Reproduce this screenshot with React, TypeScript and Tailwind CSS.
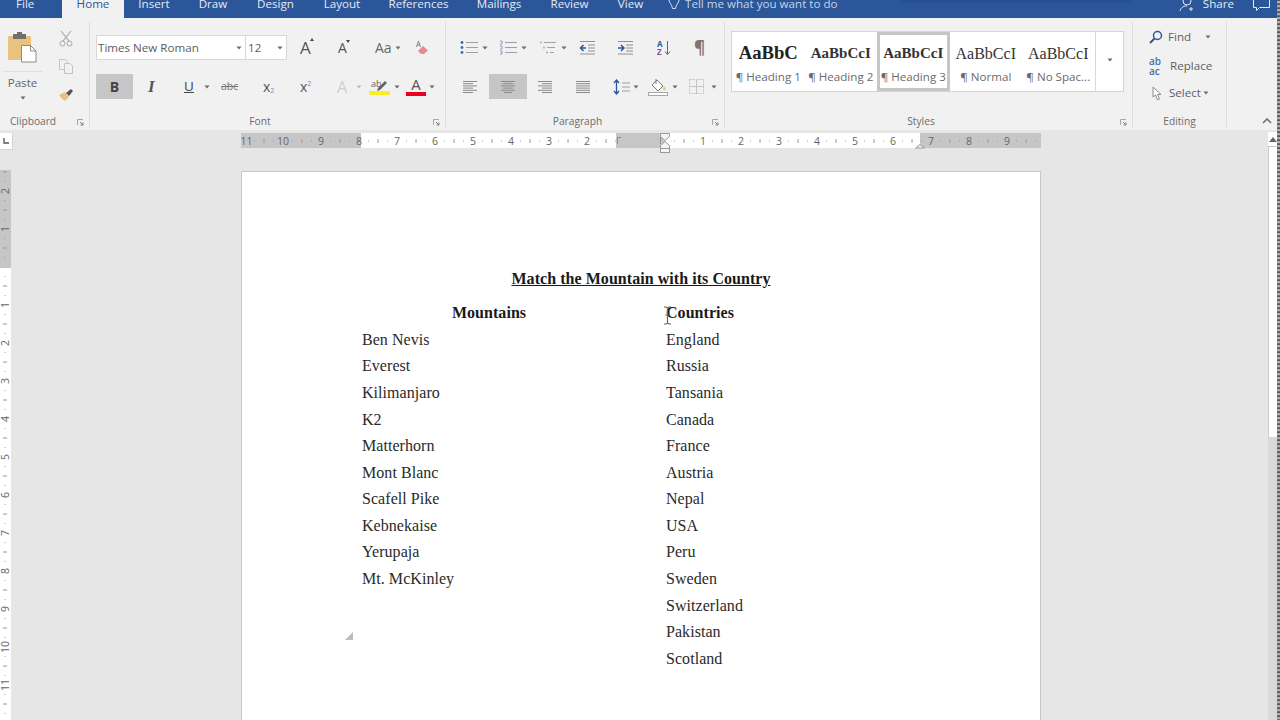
import type { ReactNode } from "react";

const tabs = [
  { name: "Insert", w: "w-[60px]" },
  { name: "Draw", w: "w-[58px]" },
  { name: "Design", w: "w-[67px]" },
  { name: "Layout", w: "w-[66px]" },
  { name: "References", w: "w-[87px]" },
  { name: "Mailings", w: "w-[74px]" },
  { name: "Review", w: "w-[67px]" },
  { name: "View", w: "w-[55px]" },
];

const mountains = ["Ben Nevis", "Everest", "Kilimanjaro", "K2", "Matterhorn", "Mont Blanc", "Scafell Pike", "Kebnekaise", "Yerupaja", "Mt. McKinley"];
const countries = ["England", "Russia", "Tansania", "Canada", "France", "Austria", "Nepal", "USA", "Peru", "Sweden", "Switzerland", "Pakistan", "Scotland"];

const styleItems = [
  { sample: "AaBbC", label: "¶ Heading 1", cls: "font-bold text-[18.7px] leading-[23px] text-[#222]", active: false },
  { sample: "AaBbCcI", label: "¶ Heading 2", cls: "font-bold text-[15px] leading-[25px] text-[#333]", active: false },
  { sample: "AaBbCcI", label: "¶ Heading 3", cls: "font-bold text-[15px] leading-[25px] text-[#333]", active: true },
  { sample: "AaBbCcI", label: "¶ Normal", cls: "text-[16px] leading-[25px] text-[#333]", active: false },
  { sample: "AaBbCcI", label: "¶ No Spac...", cls: "text-[16px] leading-[25px] text-[#333]", active: false },
];

function Caret({ className = "" }: { className?: string }) {
  return (
    <svg width="6" height="4" viewBox="0 0 6 4" className={`shrink-0 ${className}`}>
      <path d="M0.5 0.5h5L3 3.5z" fill="#6a6a6a" />
    </svg>
  );
}

function Launcher() {
  return (
    <svg width="7" height="7" viewBox="0 0 7 7" className="shrink-0">
      <path d="M0.5 6V0.5H6" fill="none" stroke="#a5a5a5" />
      <path d="M3 3l3 3M6 3.5V6H3.5" fill="none" stroke="#7d7d7d" />
    </svg>
  );
}

function Group({ label, w, labelCls = "", children }: { label: string; w: string; labelCls?: string; children: ReactNode }) {
  return (
    <div className={`flex shrink-0 flex-col ${w}`}>
      <div className="relative min-h-0 flex-1">{children}</div>
      <div className="flex h-[18px] items-center pt-[2px]">
        <div className={`flex-1 text-center text-[10.2px] text-[#6b6b6b] ${labelCls}`}>{label}</div>
        {label !== "Editing" && (
          <div className="flex w-[12px] justify-start">
            <Launcher />
          </div>
        )}
      </div>
    </div>
  );
}

function Sep() {
  return <div className="mt-[4px] mb-[3px] w-px shrink-0 bg-[#dcdcdc]" />;
}

function LinesIcon({ kind }: { kind: "left" | "center" | "right" | "justify" }) {
  const rows = [
    [0, 14],
    kind === "left" ? [0, 10] : kind === "center" ? [2, 12] : kind === "right" ? [4, 14] : [0, 14],
    [0, 14],
    kind === "left" ? [0, 10] : kind === "center" ? [2, 12] : kind === "right" ? [4, 14] : [0, 14],
    [0, 14],
    kind === "left" ? [0, 10] : kind === "center" ? [3, 11] : kind === "right" ? [4, 14] : [0, 14],
  ];
  return (
    <svg width="14" height="14" viewBox="0 0 14 14" className="shrink-0">
      {rows.map((r, i) => (
        <path key={i} d={`M${r[0]} ${1.5 + i * 2.2}H${r[1]}`} stroke="#8a8a8a" strokeWidth="1" />
      ))}
    </svg>
  );
}

function ListIcon({ marker }: { marker: "dot" | "num" | "multi" }) {
  return (
    <svg width="18" height="15" viewBox="0 0 18 15" className="shrink-0">
      {[2.5, 7.5, 12.5].map((y, i) =>
        marker === "dot" ? (
          <g key={y}>
            <circle cx="2" cy={y} r="1.4" fill="#3f6aa8" />
            <path d={`M6 ${y}H18`} stroke="#a0a0a0" />
          </g>
        ) : marker === "num" ? (
          <g key={y}>
            <path d={`M1 ${y - 1.5}h2v3H1`} fill="none" stroke="#6f8fbe" strokeWidth="0.8" />
            <path d={`M6 ${y}H18`} stroke="#a0a0a0" />
          </g>
        ) : (
          <g key={y}>
            <path d={`M${1 + i * 3} ${y - 1}v2`} stroke="#6f8fbe" />
            <path d={`M${4 + i * 3} ${y}H${16 - i}`} stroke="#a0a0a0" />
          </g>
        )
      )}
    </svg>
  );
}

function IndentIcon({ flip }: { flip?: boolean }) {
  return (
    <svg width="17" height="15" viewBox="0 0 17 15" className="shrink-0">
      <path d="M1 1.5H16M9 5H16M9 8H16M9 11H16M1 14H16" stroke="#909090" />
      {flip ? (
        <path d="M1 8H6M4 5l3 3-3 3" fill="none" stroke="#2b579a" strokeWidth="1.5" />
      ) : (
        <path d="M7 8H2M4.5 5l-3 3 3 3" fill="none" stroke="#2b579a" strokeWidth="1.5" />
      )}
    </svg>
  );
}

function PasteIcon() {
  return (
    <svg width="30" height="31" viewBox="0 0 30 31">
      <rect x="0" y="4" width="23" height="24" rx="1" fill="#e8c37f" />
      <rect x="5" y="2" width="13" height="5" fill="#6f6f6f" />
      <rect x="9" y="0" width="5" height="3" fill="#6f6f6f" />
      <path d="M13.5 13.5h9l5.5 5.5v11H13.5z" fill="#fff" stroke="#8c8c8c" />
      <path d="M22.5 13.5V19H28" fill="none" stroke="#8c8c8c" />
    </svg>
  );
}

function FontGroup() {
  return (
    <Group label="Font" w="w-[355px]" labelCls="pr-[3px]">
      <div className="mt-[17px] flex h-[25px] items-center">
        <div className="ml-[6px] flex h-[25px] w-[150px] items-center justify-between border border-[#d8d8d8] bg-white pl-[1px] pr-[3px] text-[#5c5c5c]">
          Times New Roman
          <Caret />
        </div>
        <div className="flex h-[25px] w-[41px] items-center justify-between border border-l-0 border-[#d8d8d8] bg-white pl-[2px] pr-[3px] text-[#5c5c5c]">
          12
          <Caret />
        </div>
        <div className="relative ml-[13px] w-[14px] text-[17px] leading-none text-[#555]">
          A
          <svg width="4" height="3" viewBox="0 0 4 3" className="absolute -top-[1px] left-[10px]"><path d="M0 3h4L2 0z" fill="#444" /></svg>
        </div>
        <div className="relative ml-[24px] w-[12px] text-[14px] leading-none text-[#555]">
          A
          <svg width="4" height="3" viewBox="0 0 4 3" className="absolute -top-[1px] left-[8px]"><path d="M0 0h4L2 3z" fill="#444" /></svg>
        </div>
        <div className="ml-[25px] w-[17px] text-[14px] leading-none text-[#666]">Aa</div>
        <Caret className="ml-[3px]" />
        <svg width="12" height="15" viewBox="0 0 12 15" className="ml-[15px] shrink-0">
          <path d="M5 14l-3-3 5-5 5 4.500-4 3.500z" fill="#e68a94" />
          <path d="M0.500 7L2.500 1l2 6M1.200 5h2.600" fill="none" stroke="#7a7a7a" strokeWidth="0.9" />
        </svg>
      </div>
      <div className="mt-[14px] flex h-[25px] items-center">
        <div className="ml-[6px] flex h-[25px] w-[37px] items-center justify-center bg-[#c6c6c6] text-[14px] font-bold text-[#444]">B</div>
        <div className="ml-[15px] w-[8px] font-['Liberation_Serif',serif] text-[17px] leading-none font-bold text-[#555] italic">I</div>
        <div className="ml-[28px] w-[10px] text-[13.5px] leading-none text-[#444] underline">U</div>
        <Caret className="ml-[10px]" />
        <div className="ml-[11px] w-[18px] text-[10.5px] text-[#777] line-through">abc</div>
        <div className="ml-[24px] flex w-[13px] items-end text-[14px] leading-none text-[#555]">x<span className="text-[7px] text-[#6f8fbe]">2</span></div>
        <div className="ml-[24px] flex w-[14px] items-start text-[14px] leading-none text-[#555]">x<span className="text-[7px] text-[#6f8fbe]">2</span></div>
        <div className="ml-[23px] w-[12px] text-[16px] leading-none text-[#cfcfcf]">A</div>
        <Caret className="ml-[7px] opacity-40" />
        <svg width="21" height="17" viewBox="0 0 21 17" className="ml-[7px] shrink-0">
          <text x="2" y="9" fontSize="9" fill="#666">ab</text>
          <path d="M9 10l7-7 2 2-7 7-3 1z" fill="#666" />
          <rect x="0" y="13" width="21" height="4" fill="#fbee1f" />
        </svg>
        <Caret className="ml-[4px]" />
        <div className="ml-[6px] flex w-[20px] flex-col items-center">
          <span className="text-[15px] leading-[15px] text-[#555]">A</span>
          <span className="h-[4px] w-[20px] bg-[#e8001c]" />
        </div>
        <Caret className="ml-[3px]" />
      </div>
    </Group>
  );
}

function ParagraphGroup() {
  return (
    <Group label="Paragraph" w="w-[278px]" labelCls="pr-[3px]">
      <div className="mt-[17px] flex h-[25px] items-center">
        <div className="ml-[14px]"><ListIcon marker="dot" /></div>
        <Caret className="ml-[4px]" />
        <div className="ml-[11px]"><ListIcon marker="num" /></div>
        <Caret className="ml-[4px]" />
        <div className="ml-[13px]"><ListIcon marker="multi" /></div>
        <Caret className="ml-[3px]" />
        <div className="ml-[12px]"><IndentIcon /></div>
        <div className="ml-[21px]"><IndentIcon flip /></div>
        <svg width="14" height="16" viewBox="0 0 14 16" className="ml-[23px] shrink-0">
          <text x="0" y="7" fontSize="8" fontWeight="700" fill="#2b579a">A</text>
          <text x="0" y="15" fontSize="8" fontWeight="700" fill="#8a4aa0">Z</text>
          <path d="M10.5 1v13M8 11.5l2.5 3 2.5-3" fill="none" stroke="#666" />
        </svg>
        <div className="ml-[23px] w-[13px] text-[17px] leading-none font-bold text-[#777]">¶</div>
      </div>
      <div className="mt-[14px] flex h-[25px] items-center">
        <div className="ml-[17px]"><LinesIcon kind="left" /></div>
        <div className="ml-[12px] flex h-[25px] w-[38px] items-center justify-center bg-[#c6c6c6]"><LinesIcon kind="center" /></div>
        <div className="ml-[11px]"><LinesIcon kind="right" /></div>
        <div className="ml-[24px]"><LinesIcon kind="justify" /></div>
        <svg width="17" height="16" viewBox="0 0 17 16" className="ml-[23px] shrink-0">
          <path d="M3.5 1v14M1 4l2.5-3L6 4M1 12l2.5 3L6 12" fill="none" stroke="#2b579a" strokeWidth="1.3" />
          <path d="M9 4H17M9 8H17M9 12H17" stroke="#a0a0a0" />
        </svg>
        <Caret className="ml-[3px]" />
        <svg width="20" height="18" viewBox="0 0 20 18" className="ml-[9px] shrink-0">
          <path d="M4 7l5-5 6 6-5 5z" fill="#fff" stroke="#7a7a7a" />
          <path d="M8 1v5" stroke="#7a7a7a" />
          <path d="M16 8c1.5 2 2 3 1 4s-2 0-2-1 .5-2 1-3z" fill="#e8c37f" />
          <rect x="0.5" y="14.5" width="19" height="3" fill="#fff" stroke="#a8a8a8" />
        </svg>
        <Caret className="ml-[4px]" />
        <svg width="15" height="15" viewBox="0 0 15 15" className="ml-[11px] shrink-0">
          <rect x="0.5" y="0.5" width="14" height="14" fill="none" stroke="#c4c4c4" strokeDasharray="2 1" />
          <path d="M7.5 0v15M0 7.5h15" stroke="#c4c4c4" />
        </svg>
        <Caret className="ml-[7px]" />
      </div>
    </Group>
  );
}

function StylesGroup() {
  return (
    <Group label="Styles" w="w-[407px]" labelCls="pr-[3px]">
      <div className="mt-[13px] ml-[6px] flex h-[61px] w-[393px] border border-[#d4d4d4] bg-white font-['Liberation_Serif',serif]">
        {styleItems.map((s) => (
          <div
            key={s.label}
            className={`flex h-[59px] w-[72.5px] shrink-0 flex-col items-center overflow-hidden border-[3px] pt-[6px] ${
              s.active ? "border-[#c6c6c6]" : "border-transparent"
            }`}
          >
            <div className={`h-[25px] w-full overflow-hidden text-center whitespace-nowrap ${s.cls}`}>{s.sample}</div>
            <div className="mt-[2px] font-['Open_Sans',sans-serif] text-[11.6px] leading-[18px] whitespace-nowrap text-[#6b6b6b]">{s.label}</div>
          </div>
        ))}
        <div className="ml-auto flex w-[28px] shrink-0 items-center justify-center border-l border-[#d8d8d8] pb-[4px]">
          <Caret />
        </div>
      </div>
    </Group>
  );
}

function EditingGroup() {
  return (
    <Group label="Editing" w="w-[93px]">
      <div className="flex flex-col pt-[5px] text-[#5f5f5f]">
        <div className="flex h-[28px] items-center pl-[16px]">
          <svg width="14" height="14" viewBox="0 0 14 14" className="shrink-0">
            <circle cx="8.5" cy="5.5" r="4" fill="none" stroke="#2b579a" strokeWidth="1.5" />
            <path d="M5.5 8.5L1 13" stroke="#2b579a" strokeWidth="2" />
          </svg>
          <span className="ml-[5px] w-[37px]">Find</span>
          <Caret />
        </div>
        <div className="flex h-[28px] items-center pl-[16px] pt-[1px]">
          <div className="flex w-[16px] flex-col text-[10px] leading-[10px] font-semibold text-[#4a6fa5]">
            <span>ab</span>
            <span>ac</span>
          </div>
          <span className="ml-[5px]">Replace</span>
        </div>
        <div className="flex h-[28px] items-center pl-[19px]">
          <svg width="11" height="15" viewBox="0 0 11 15" className="shrink-0">
            <path d="M1 1v10l2.5-2 2 5 2-1-2-4.500h3.500z" fill="#fff" stroke="#8a8a8a" />
          </svg>
          <span className="ml-[6px]">Select</span>
          <Caret className="ml-[2px]" />
        </div>
      </div>
    </Group>
  );
}

function Ribbon() {
  return (
    <div className="flex h-[112px] shrink-0 bg-[#f1f1f1]">
      <Group label="Clipboard" w="w-[89px]" labelCls="pr-[11px]">
        <div className="flex">
          <div className="mt-[14px] ml-[3px] flex w-[39px] flex-col items-center">
            <PasteIcon />
            <div className="mt-[8px] h-px w-[39px] bg-[#dedede]" />
            <span className="mt-[2px] leading-[18px] text-[#666]">Paste</span>
            <Caret className="mt-[4px]" />
          </div>
          <div className="ml-[16px] flex flex-col items-center pt-[12px]">
            <svg width="14" height="17" viewBox="0 0 14 17">
              <path d="M2 1l8 10M12 1L4 11" stroke="#a8a8a8" strokeWidth="1.2" fill="none" />
              <circle cx="3.500" cy="13.500" r="2.500" fill="none" stroke="#a8a8a8" />
              <circle cx="10.500" cy="13.500" r="2.500" fill="none" stroke="#a8a8a8" />
            </svg>
            <svg width="14" height="15" viewBox="0 0 14 15" className="mt-[12px]">
              <path d="M0.500 0.500h6l2 2v8H0.500z" fill="#f1f1f1" stroke="#c4c4c4" />
              <path d="M5.500 4.500h5.500l2.500 2.500v7.500h-8z" fill="#f1f1f1" stroke="#c4c4c4" />
            </svg>
            <svg width="16" height="14" viewBox="0 0 16 14" className="mt-[14px]">
              <path d="M1 7l6-3 4 5-4 4C5 12 3 10 1 7z" fill="#e8c37f" />
              <path d="M8 5l5-4 2 2-4 5z" fill="#555" />
            </svg>
          </div>
        </div>
      </Group>
      <Sep />
      <FontGroup />
      <Sep />
      <ParagraphGroup />
      <Sep />
      <StylesGroup />
      <Sep />
      <EditingGroup />
      <Sep />
      <div className="flex flex-1 items-end justify-end pr-[5px] pb-[6px]">
        <svg width="10" height="6" viewBox="0 0 10 6">
          <path d="M1 5l4-4 4 4" fill="none" stroke="#6a6a6a" strokeWidth="1.500" />
        </svg>
      </div>
    </div>
  );
}

const UNIT = 38;
const nums = (n: number) => Array.from({ length: n }, (_, i) => i + 1);

function HRuler() {
  const left = 422;
  const right = 424;
  const marks: number[] = [];
  // quarter-inch marks, kept inside the 800px bar
  for (let q = -44; q <= 39; q++) {
    if (q % 4 !== 0 && (q > 0 || q < -4)) marks.push(q);
  }
  return (
    <svg width="800" height="24" viewBox="0 0 800 24" className="block shrink-0">
      <rect x="0" y="3" width="800" height="15" fill="#c6c6c6" />
      <rect x="120" y="3" width="255" height="15" fill="#fff" />
      <rect x="424" y="3" width="255" height="15" fill="#fff" />
      {marks.map((q) => {
        const x = (q < 0 ? left : right) + (q * UNIT) / 4;
        return q % 2 === 0 ? (
          <path key={q} d={`M${x} 9v4`} stroke="#9a9a9a" />
        ) : (
          <rect key={q} x={x - 0.5} y="10.500" width="1" height="1" fill="#9a9a9a" />
        );
      })}
      {nums(11)
        .filter((n) => n > 1)
        .map((n) => (
          <text key={n} x={n === 11 ? 5.5 : left - n * UNIT} y="14.500" textAnchor="middle" fontSize="10.500" fill="#666">{n}</text>
        ))}
      {nums(9).map((n) => (
        <text key={n} x={right + n * UNIT} y="14.500" textAnchor="middle" fontSize="10.500" fill="#666">{n}</text>
      ))}
      <path d="M376.500 14V7.500H380" fill="none" stroke="#8a8a8a" />
      <path d="M419.500 14V7.500H422" fill="none" stroke="#8a8a8a" />
      <path d="M419.500 3.500h9v3l-4.500 4-4.500-4z" fill="#f4f4f4" stroke="#9a9a9a" />
      <path d="M424 11.500l4.500 4v3h-9v-3z" fill="#f4f4f4" stroke="#9a9a9a" />
      <rect x="419.500" y="18.500" width="9" height="4" fill="#f4f4f4" stroke="#9a9a9a" />
      <path d="M679 14.500l4.500 3.500h-9z" fill="#f4f4f4" stroke="#9a9a9a" />
    </svg>
  );
}

function VRuler() {
  const zero = 97;
  const marks: number[] = [];
  for (let q = -10; q <= 47; q++) if (q % 4 !== 0) marks.push(q);
  return (
    <svg width="11" height="550" viewBox="0 0 11 550" className="block shrink-0">
      <rect x="0" y="0" width="11" height="98" fill="#c6c6c6" />
      <rect x="0" y="98" width="11" height="452" fill="#fff" />
      {marks.map((q) => {
        const y = zero + (q * UNIT) / 4;
        return q % 2 === 0 ? (
          <path key={q} d={`M3 ${y}h4`} stroke="#9a9a9a" />
        ) : (
          <rect key={q} x="4.500" y={y - 0.500} width="1" height="1" fill="#9a9a9a" />
        );
      })}
      {[-2, -1, ...nums(11)].map((n) => (
        <text
          key={n}
          x="5"
          y={zero + n * UNIT}
          textAnchor="middle"
          dominantBaseline="central"
          fontSize="10.500"
          fill="#666"
          transform={`rotate(-90 5 ${zero + n * UNIT})`}
        >
          {Math.abs(n)}
        </text>
      ))}
    </svg>
  );
}

function Page() {
  return (
    <div className="relative mt-[17px] flex-1 border border-b-0 border-[#c8c8c8] bg-white pt-[94px] font-['Liberation_Serif',serif] text-[16px] leading-[26.6px] tracking-[0.05px] text-[#2a2a2a]">
      <div className="text-center font-bold text-[#1a1a1a] underline">Match the Mountain with its Country</div>
      <div className="mt-[7.55px] grid grid-cols-[304px_1fr] pl-[120px]">
        <div>
          <div className="w-[254px] text-center font-bold text-[#1a1a1a]">Mountains</div>
          {mountains.map((m) => (
            <div key={m}>{m}</div>
          ))}
        </div>
        <div>
          <div className="relative font-bold text-[#1a1a1a]">
            Countries
            <svg width="9" height="19" viewBox="0 0 9 19" className="absolute top-[6px] -left-[3px]">
              <path d="M1 1h2l1.500 1 1.500-1h2M4.500 2v15M1 18h2l1.500-1 1.500 1h2M2.500 9h4" fill="none" stroke="#666" strokeWidth="1.200" />
            </svg>
          </div>
          {countries.map((c) => (
            <div key={c}>{c}</div>
          ))}
        </div>
      </div>
      <svg width="8" height="8" viewBox="0 0 8 8" className="absolute top-[460px] left-[103px]">
        <path d="M8 0v8H0z" fill="#bcbcbc" />
      </svg>
    </div>
  );
}

export default function App() {
  return (
    <div className="flex h-[720px] w-[1280px] overflow-hidden font-['Open_Sans',sans-serif] text-[11.6px]">
      <div className="flex w-[1277px] shrink-0 flex-col">
        <div className="relative flex h-[18px] shrink-0 items-start bg-[#2b579a] leading-[8px] text-[#e4eaf4]">
          <div className="w-[62px] pl-[16px]">File</div>
          <div className="h-[18px] w-[62px] bg-[#f1f1f1] text-center text-[#2b579a]">Home</div>
          {tabs.map((t) => (
            <div key={t.name} className={`${t.w} text-center`}>{t.name}</div>
          ))}
          <svg width="12" height="10" viewBox="0 0 12 10" className="ml-[10px] shrink-0">
            <path d="M1 0c0 3 3 4 3.500 8.500h3C8 4 11 3 11 0" fill="none" stroke="#d8e1ef" />
          </svg>
          <div className="ml-[5px] text-[#c6d3e8]">Tell me what you want to do</div>
          <div className="absolute top-0 left-[900px] h-[3px] w-[230px] rounded-b-full bg-[#26508f]" />
          <div className="flex flex-1 items-start justify-end">
            <svg width="16" height="11" viewBox="0 0 16 11" className="shrink-0">
              <circle cx="8" cy="1" r="4" fill="none" stroke="#e4eaf4" />
              <path d="M1 11c1-4 4-5 7-5M12 7v4M10 9h4" fill="none" stroke="#e4eaf4" />
            </svg>
            <span className="ml-[8px]">Share</span>
            <svg width="17" height="11" viewBox="0 0 17 11" className="mr-[7px] ml-[19px] shrink-0">
              <path d="M0.500 0v7.500h3v3l3-3h10V0" fill="none" stroke="#e4eaf4" />
            </svg>
          </div>
        </div>
        <Ribbon />
        <div className="flex min-h-0 flex-1 bg-[#e6e6e6]">
          <div className="flex w-[241px] shrink-0 flex-col">
            <div className="mt-[3px] flex h-[17px] w-[13px] items-center justify-center border-r border-b border-[#d4d4d4] bg-white">
              <svg width="6" height="6" viewBox="0 0 6 6"><path d="M1 0v5h5" fill="none" stroke="#555" strokeWidth="1.300" /></svg>
            </div>
            <div className="mt-[20px]">
              <VRuler />
            </div>
          </div>
          <div className="flex w-[800px] shrink-0 flex-col">
            <HRuler />
            <Page />
          </div>
          <div className="w-[227px] shrink-0" />
          <div className="flex w-[9px] shrink-0 flex-col pt-[2px]">
            <div className="flex h-[15px] items-center justify-center border-b border-[#c8c8c8] bg-white">
              <svg width="8" height="5" viewBox="0 0 8 5"><path d="M0 5h8L4 0z" fill="#666" /></svg>
            </div>
            <div className="h-[290px] border-l border-[#cfcfcf] bg-white" />
            <div className="flex-1 bg-[#d9d9d9]" />
          </div>
        </div>
      </div>
      <div className="w-[3px] shrink-0 bg-[repeating-linear-gradient(0deg,#6f6f6f_0px,#6f6f6f_1px,#b0aca8_1px,#b0aca8_3px,#55565c_3px,#55565c_4px)]" />
    </div>
  );
}
